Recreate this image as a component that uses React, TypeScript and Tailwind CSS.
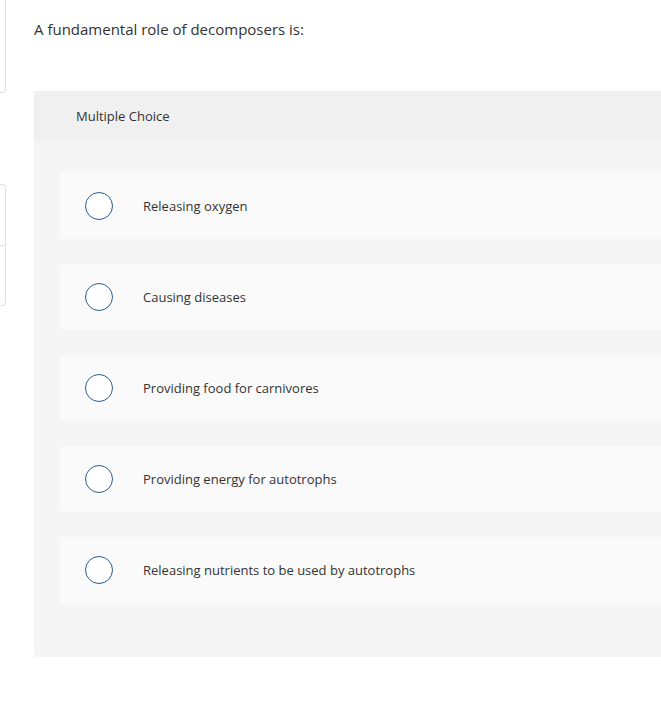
import React from "react";

const options = [
  "Releasing oxygen",
  "Causing diseases",
  "Providing food for carnivores",
  "Providing energy for autotrophs",
  "Releasing nutrients to be used by autotrophs",
];

const App = () => {
  return (
    <div
      className="flex w-[661px] h-[716px] overflow-hidden bg-white text-[#333333]"
      style={{ fontFamily: "'Open Sans', 'Liberation Sans', sans-serif" }}
    >
      {/* sidebar edge */}
      <div className="w-[6px] shrink-0 flex flex-col">
        <div className="h-[93px] border-r border-b border-[#e2e2e2] rounded-br-[4px]" />
        <div className="mt-[91px] h-[122px] flex flex-col border-y border-r border-[#e2e2e2] rounded-r-[4px]">
          <div className="h-[61px] border-b border-[#e2e2e2]" />
        </div>
      </div>

      <div className="ml-[28px] flex flex-col shrink-0">
        <h2 className="pt-[17px] h-[91px] text-[15px] leading-6 font-normal">
          A fundamental role of decomposers is:
        </h2>

        <div className="w-[680px] bg-[#f5f5f5] rounded-bl-[3px]">
          <div className="h-[50px] bg-[#f0f0f0] flex items-center pl-[42px] pt-[2px] text-[13px]">
            Multiple Choice
          </div>
          <div className="flex flex-col gap-[25px] pt-[32px] pb-[54px] pl-[26px]">
            {options.map((opt) => (
              <div
                key={opt}
                className="h-[66px] bg-[#fafafa] rounded-l-[3px] flex items-center pl-[25px]"
              >
                <span className="w-[28px] h-[28px] rounded-full border-[1.5px] border-[#2b5e8f] bg-white shrink-0" />
                <span className="ml-[30px] pt-[2px] text-[13px]">{opt}</span>
              </div>
            ))}
          </div>
        </div>
      </div>
    </div>
  );
};

export default App;
